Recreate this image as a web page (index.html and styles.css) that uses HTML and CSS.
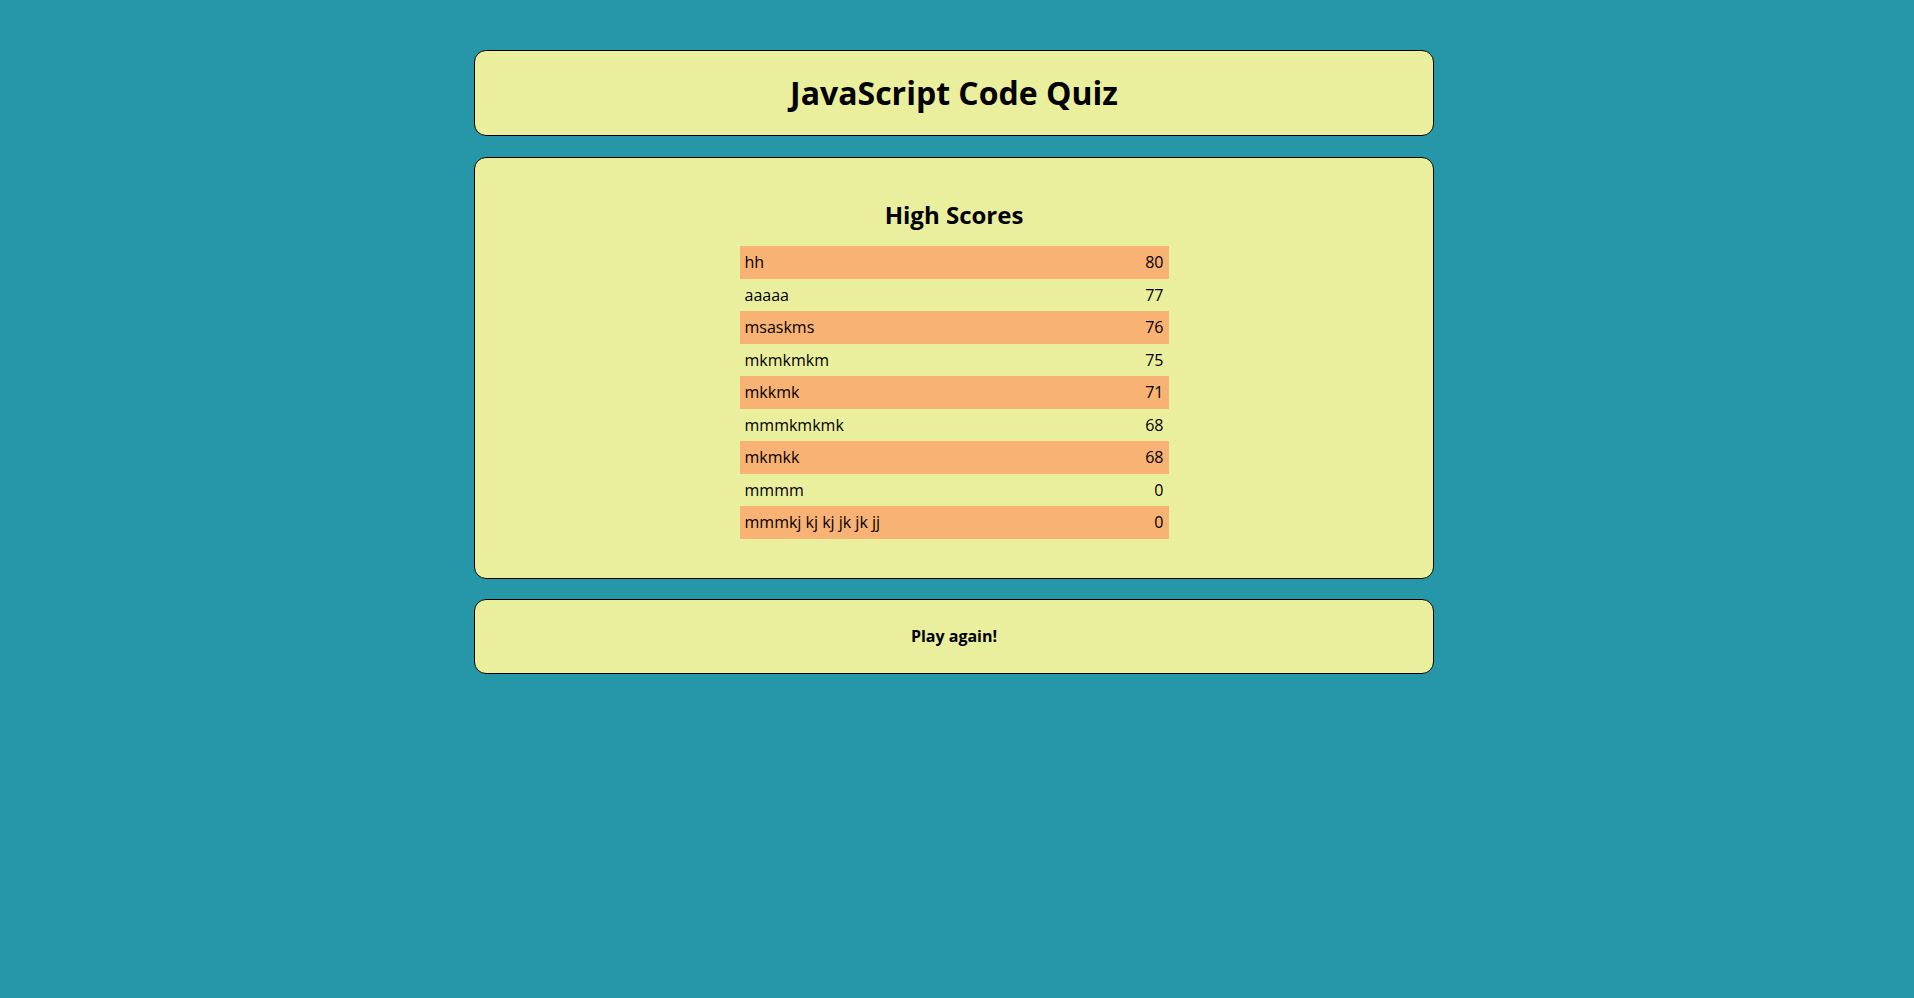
FILE: index.html
```html
<!DOCTYPE html>
<html lang="en">
<head>
    <meta charset="UTF-8">
    <meta name="viewport" content="width=device-width, initial-scale=1.0">
    <title>JavaScript Code Quiz</title>
    <link rel="stylesheet" href="styles.css">
</head>
<body>

    <!-- Page title -->
    <header class="panel title-panel">
        <h1>JavaScript Code Quiz</h1>
    </header>

    <!-- High score list -->
    <main class="panel scores-panel">
        <h2>High Scores</h2>
        <table class="score-table">
            <tbody>
                <tr><td>hh</td><td class="score">80</td></tr>
                <tr><td>aaaaa</td><td class="score">77</td></tr>
                <tr><td>msaskms</td><td class="score">76</td></tr>
                <tr><td>mkmkmkm</td><td class="score">75</td></tr>
                <tr><td>mkkmk</td><td class="score">71</td></tr>
                <tr><td>mmmkmkmk</td><td class="score">68</td></tr>
                <tr><td>mkmkk</td><td class="score">68</td></tr>
                <tr><td>mmmm</td><td class="score">0</td></tr>
                <tr><td>mmmkj kj kj jk jk jj</td><td class="score">0</td></tr>
            </tbody>
        </table>
    </main>

    <!-- Restart -->
    <div class="panel replay-panel">
        <a class="replay-link" href="#">Play again!</a>
    </div>

</body>
</html>
```

FILE: styles.css
```css
/* General styling */
body {
    font-family: "Open Sans", "Liberation Sans", sans-serif;
    background-color: #2697a9;
    color: #000;
    margin: 0;
    padding: 50px 6px 0 0;
}

/* Shared card look */
.panel {
    box-sizing: border-box;
    width: 960px;
    margin: 0 auto 21px;
    background-color: #eaef9e;
    border: 1px solid #000;
    border-radius: 12px;
    text-align: center;
}

/* Title card */
.title-panel {
    padding: 20px 20px 21px;
}

.title-panel h1 {
    margin: 0;
    font-size: 32px;
    font-weight: 700;
}

/* Scores card */
.scores-panel {
    padding: 40px 20px 39px;
    margin-bottom: 20px;
}

.scores-panel h2 {
    margin: 0 0 15px;
    font-size: 24px;
    font-weight: 700;
}

.score-table {
    width: 429px;
    margin: 0 auto;
    border-collapse: collapse;
    font-size: 16px;
    text-align: left;
}

.score-table td {
    padding: 5px;
    line-height: 22.5px;
}

.score-table tr:nth-child(odd) {
    background-color: #f8b273;
}

.score-table .score {
    text-align: right;
}

/* Play again card */
.replay-panel {
    padding: 25px 20px 26px;
}

.replay-link {
    color: #000;
    font-size: 16px;
    font-weight: 700;
    text-decoration: none;
}
```
